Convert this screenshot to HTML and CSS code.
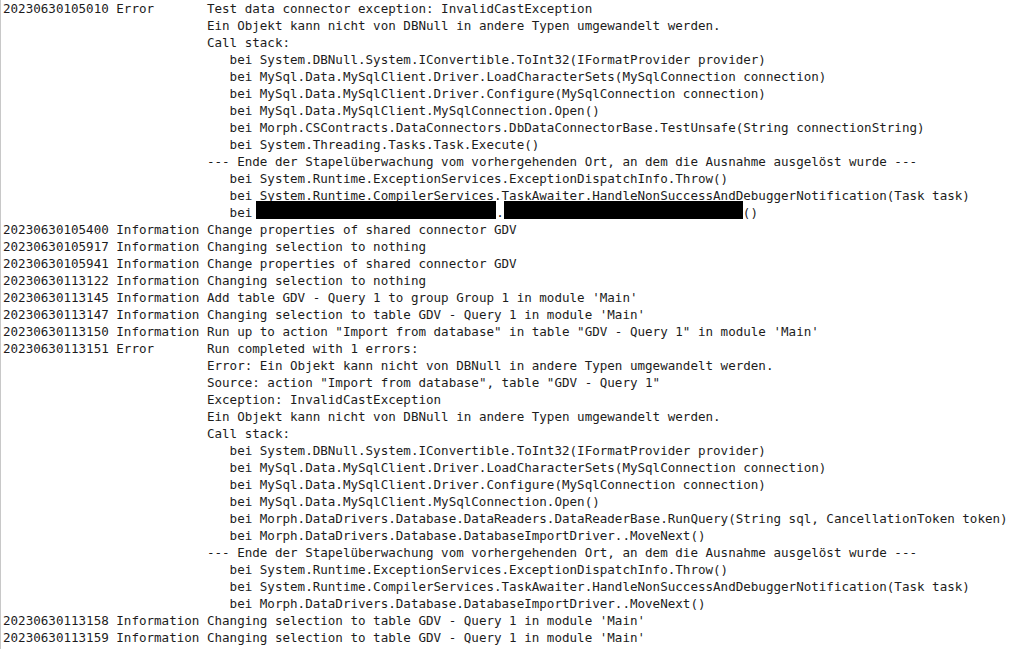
FILE: index.html
```html
<!DOCTYPE html>
<html lang="de">
<head>
<meta charset="utf-8">
<title>Log</title>
<link rel="stylesheet" href="styles.css">
</head>
<body>
<div class="log">
  <div class="entry">
    <span class="ts">20230630105010</span><span class="lvl">Error</span>
    <div class="msg">
      <div>Test data connector exception: InvalidCastException</div>
      <div>Ein Objekt kann nicht von DBNull in andere Typen umgewandelt werden.</div>
      <div>Call stack:</div>
      <div class="frame">bei System.DBNull.System.IConvertible.ToInt32(IFormatProvider provider)</div>
      <div class="frame">bei MySql.Data.MySqlClient.Driver.LoadCharacterSets(MySqlConnection connection)</div>
      <div class="frame">bei MySql.Data.MySqlClient.Driver.Configure(MySqlConnection connection)</div>
      <div class="frame">bei MySql.Data.MySqlClient.MySqlConnection.Open()</div>
      <div class="frame">bei Morph.CSContracts.DataConnectors.DbDataConnectorBase.TestUnsafe(String connectionString)</div>
      <div class="frame">bei System.Threading.Tasks.Task.Execute()</div>
      <div>--- Ende der Stapelüberwachung vom vorhergehenden Ort, an dem die Ausnahme ausgelöst wurde ---</div>
      <div class="frame">bei System.Runtime.ExceptionServices.ExceptionDispatchInfo.Throw()</div>
      <div class="frame">bei System.Runtime.CompilerServices.TaskAwaiter.HandleNonSuccessAndDebuggerNotification(Task task)</div>
      <div class="frame">bei<span class="redact r1"></span>.<span class="redact r2"></span>()</div>
    </div>
  </div>
  <div class="entry"><span class="ts">20230630105400</span><span class="lvl">Information</span><div class="msg"><div>Change properties of shared connector GDV</div></div></div>
  <div class="entry"><span class="ts">20230630105917</span><span class="lvl">Information</span><div class="msg"><div>Changing selection to nothing</div></div></div>
  <div class="entry"><span class="ts">20230630105941</span><span class="lvl">Information</span><div class="msg"><div>Change properties of shared connector GDV</div></div></div>
  <div class="entry"><span class="ts">20230630113122</span><span class="lvl">Information</span><div class="msg"><div>Changing selection to nothing</div></div></div>
  <div class="entry"><span class="ts">20230630113145</span><span class="lvl">Information</span><div class="msg"><div>Add table GDV - Query 1 to group Group 1 in module 'Main'</div></div></div>
  <div class="entry"><span class="ts">20230630113147</span><span class="lvl">Information</span><div class="msg"><div>Changing selection to table GDV - Query 1 in module 'Main'</div></div></div>
  <div class="entry"><span class="ts">20230630113150</span><span class="lvl">Information</span><div class="msg"><div>Run up to action "Import from database" in table "GDV - Query 1" in module 'Main'</div></div></div>
  <div class="entry">
    <span class="ts">20230630113151</span><span class="lvl">Error</span>
    <div class="msg">
      <div>Run completed with 1 errors:</div>
      <div>Error: Ein Objekt kann nicht von DBNull in andere Typen umgewandelt werden.</div>
      <div>Source: action "Import from database", table "GDV - Query 1"</div>
      <div>Exception: InvalidCastException</div>
      <div>Ein Objekt kann nicht von DBNull in andere Typen umgewandelt werden.</div>
      <div>Call stack:</div>
      <div class="frame">bei System.DBNull.System.IConvertible.ToInt32(IFormatProvider provider)</div>
      <div class="frame">bei MySql.Data.MySqlClient.Driver.LoadCharacterSets(MySqlConnection connection)</div>
      <div class="frame">bei MySql.Data.MySqlClient.Driver.Configure(MySqlConnection connection)</div>
      <div class="frame">bei MySql.Data.MySqlClient.MySqlConnection.Open()</div>
      <div class="frame">bei Morph.DataDrivers.Database.DataReaders.DataReaderBase.RunQuery(String sql, CancellationToken token)</div>
      <div class="frame">bei Morph.DataDrivers.Database.DatabaseImportDriver..MoveNext()</div>
      <div>--- Ende der Stapelüberwachung vom vorhergehenden Ort, an dem die Ausnahme ausgelöst wurde ---</div>
      <div class="frame">bei System.Runtime.ExceptionServices.ExceptionDispatchInfo.Throw()</div>
      <div class="frame">bei System.Runtime.CompilerServices.TaskAwaiter.HandleNonSuccessAndDebuggerNotification(Task task)</div>
      <div class="frame">bei Morph.DataDrivers.Database.DatabaseImportDriver..MoveNext()</div>
    </div>
  </div>
  <div class="entry"><span class="ts">20230630113158</span><span class="lvl">Information</span><div class="msg"><div>Changing selection to table GDV - Query 1 in module 'Main'</div></div></div>
  <div class="entry"><span class="ts">20230630113159</span><span class="lvl">Information</span><div class="msg"><div>Changing selection to table GDV - Query 1 in module 'Main'</div></div></div>
</div>
</body>
</html>
```
FILE: styles.css
```css
html, body {
  margin: 0;
  padding: 0;
  background: #ffffff;
}
body {
  width: 1024px;
  height: 649px;
  overflow: hidden;
}
.log {
  height: 649px;
  border-left: 1px solid #c8c8c8;
  padding-left: 2px;
  font-family: "DejaVu Sans Mono", "Liberation Mono", monospace;
  font-size: 12.55px;
  line-height: 17px;
  color: #1c1c1c;
  white-space: nowrap;
}
.entry {
  display: grid;
  grid-template-columns: 15ch 12ch 1fr;
}
.msg div {
  height: 17px;
}
.msg .frame {
  padding-left: 3ch;
}
.redact {
  display: inline-block;
  height: 18px;
  margin-top: -3px;
  vertical-align: top;
  background: #000000;
}
.r1 {
  width: 240px;
  margin-left: 4px;
}
.r2 {
  width: 239px;
}
```
